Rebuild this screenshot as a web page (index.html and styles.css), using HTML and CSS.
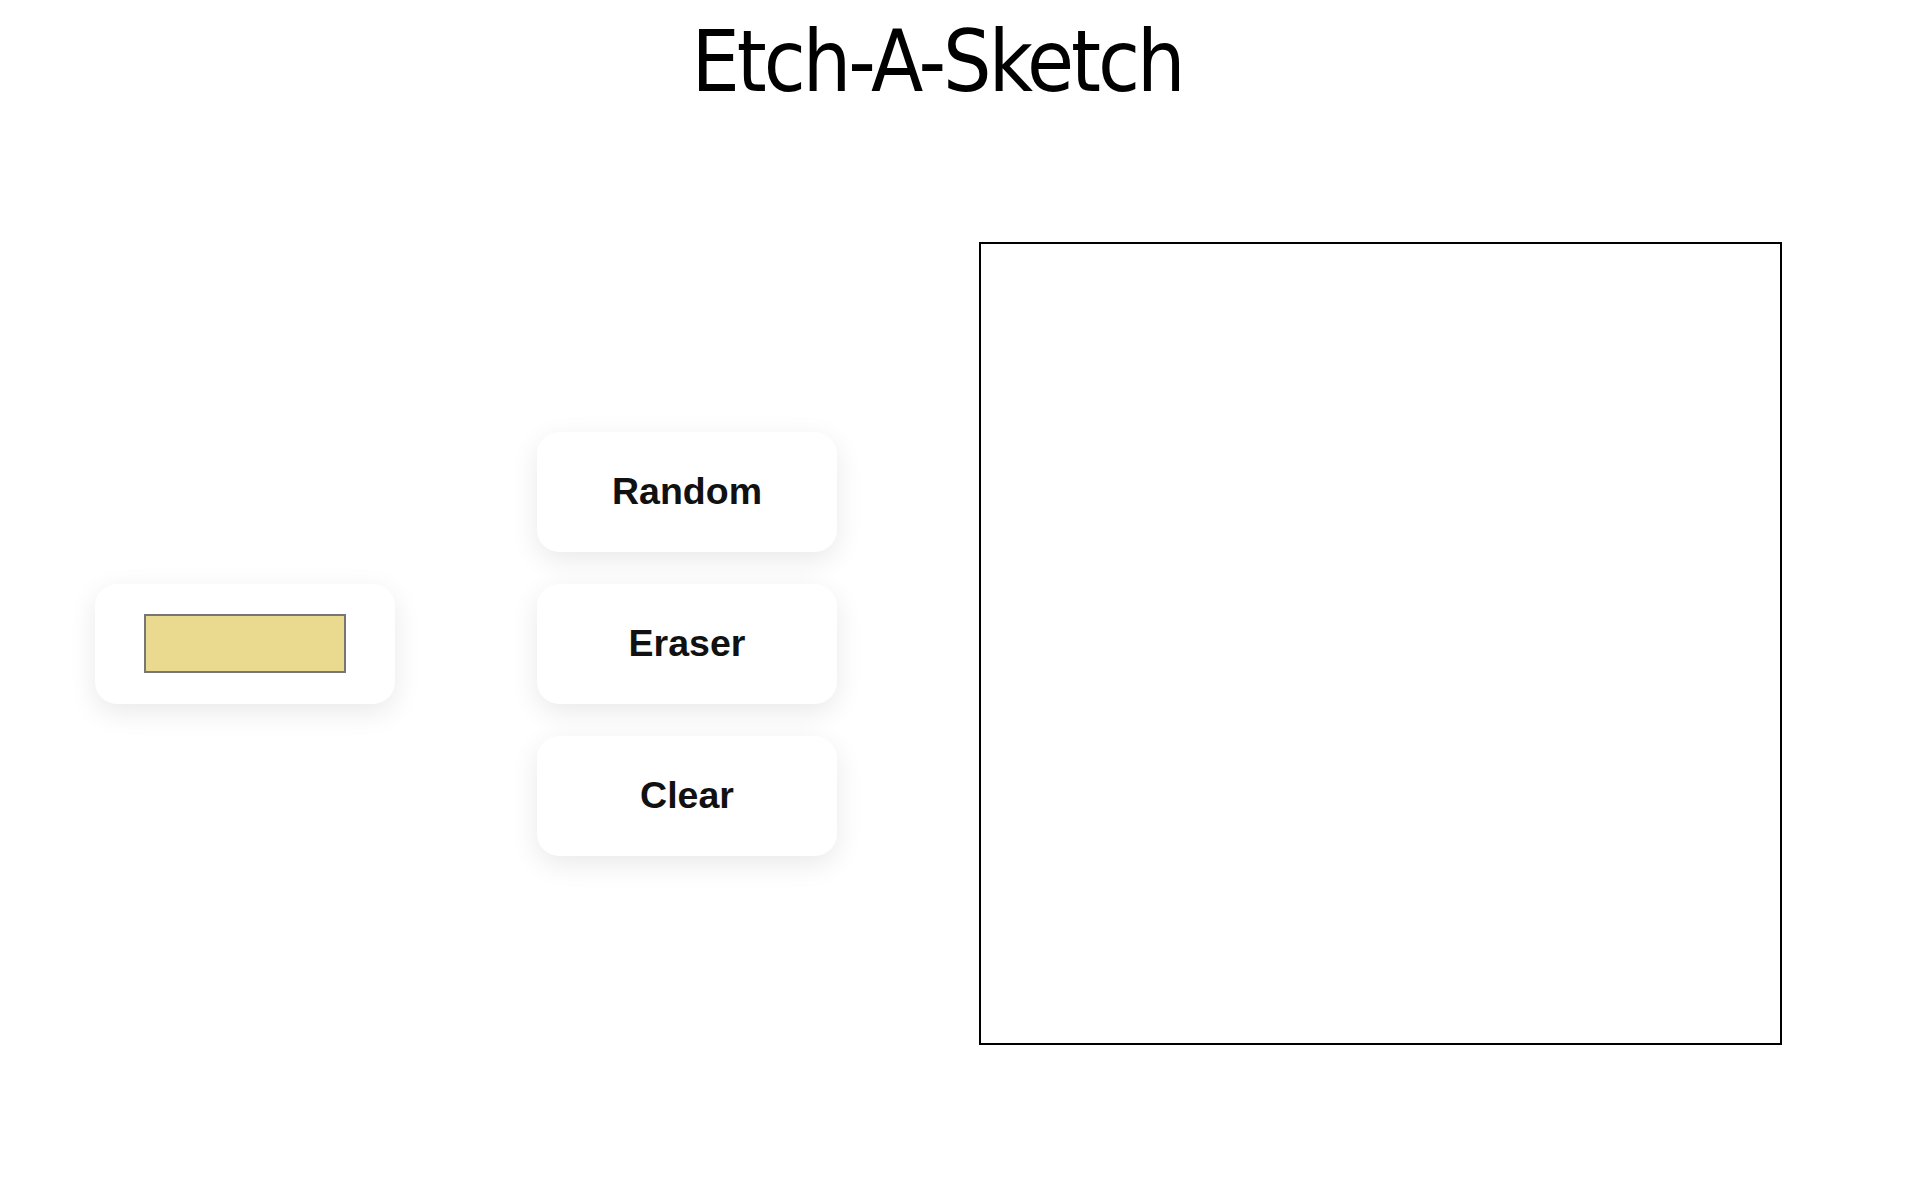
FILE: index.html
```html
<!DOCTYPE html>
<html lang="en">
<head>
    <meta charset="UTF-8">
    <meta name="viewport" content="width=device-width, initial-scale=1.0">
    <title>Etch-A-Sketch</title>
    <link rel="stylesheet" href="styles.css">
</head>
<body>
<h1>Etch-A-Sketch</h1>

<div class="workspace">
    <div class="panel">
        <input type="color" id="colorPicker" value="#e9da8f">
    </div>
    <div class="controls">
        <button id="randomBtn">Random</button>
        <button id="eraserBtn">Eraser</button>
        <button id="clearBtn">Clear</button>
    </div>
    <div class="grid" id="grid"></div>
</div>
<script src="script.js"></script>
</body>
</html>
```

FILE: styles.css
```css
/* General Styles */
body {
    margin: 0;
    background: #ffffff;
    color: #111111;
    font-family: "Liberation Sans", Arial, sans-serif;
}

h1 {
    margin: 0;
    padding-top: 19px;
    padding-right: 36px;
    font-family: "DejaVu Sans Condensed", "DejaVu Sans", sans-serif;
    font-weight: normal;
    font-size: 85px;
    line-height: 1;
    letter-spacing: -3px;
    text-align: center;
    color: #000000;
}

.workspace {
    display: flex;
    align-items: center;
    gap: 142px;
    padding-left: 95px;
    margin-top: 138px;
}

/* white cards with a soft shadow */
.panel,
.controls button {
    width: 300px;
    height: 120px;
    border-radius: 22px;
    background: #ffffff;
    box-shadow: 0 8px 28px rgba(0, 0, 0, 0.09);
}

.panel {
    display: flex;
    justify-content: center;
    align-items: center;
}

#colorPicker {
    -webkit-appearance: none;
    appearance: none;
    width: 202px;
    height: 59px;
    padding: 0;
    border: 2px solid #767676;
    background: #e9da8f;
    cursor: pointer;
}

#colorPicker::-webkit-color-swatch-wrapper {
    padding: 0;
}

#colorPicker::-webkit-color-swatch {
    border: none;
}

.controls {
    display: flex;
    flex-direction: column;
    gap: 32px;
}

.controls button {
    border: none;
    font-family: "Liberation Sans", Arial, sans-serif;
    font-size: 37.5px;
    font-weight: bold;
    color: #111111;
    cursor: pointer;
}

.grid {
    display: grid;
    width: 799px;
    height: 799px;
    border: 2px solid #000000;
}

.cell {
    background: #ffffff;
}
```

FILE: script.js
```js
const grid = document.getElementById('grid');
const picker = document.getElementById('colorPicker');
let mode = 'color';
const size = 16;

function buildGrid(n) {
    grid.innerHTML = '';
    grid.style.gridTemplateColumns = `repeat(${n}, 1fr)`;
    for (let i = 0; i < n * n; i++) {
        const cell = document.createElement('div');
        cell.className = 'cell';
        cell.addEventListener('mouseover', paint);
        grid.appendChild(cell);
    }
}

function paint(e) {
    if (mode === 'random') {
        e.target.style.background = `hsl(${Math.floor(Math.random() * 360)}, 70%, 60%)`;
    } else if (mode === 'eraser') {
        e.target.style.background = '#ffffff';
    } else {
        e.target.style.background = picker.value;
    }
}

picker.addEventListener('input', () => mode = 'color');
document.getElementById('randomBtn').addEventListener('click', () => mode = 'random');
document.getElementById('eraserBtn').addEventListener('click', () => mode = 'eraser');
document.getElementById('clearBtn').addEventListener('click', () => buildGrid(size));

buildGrid(size);
```
